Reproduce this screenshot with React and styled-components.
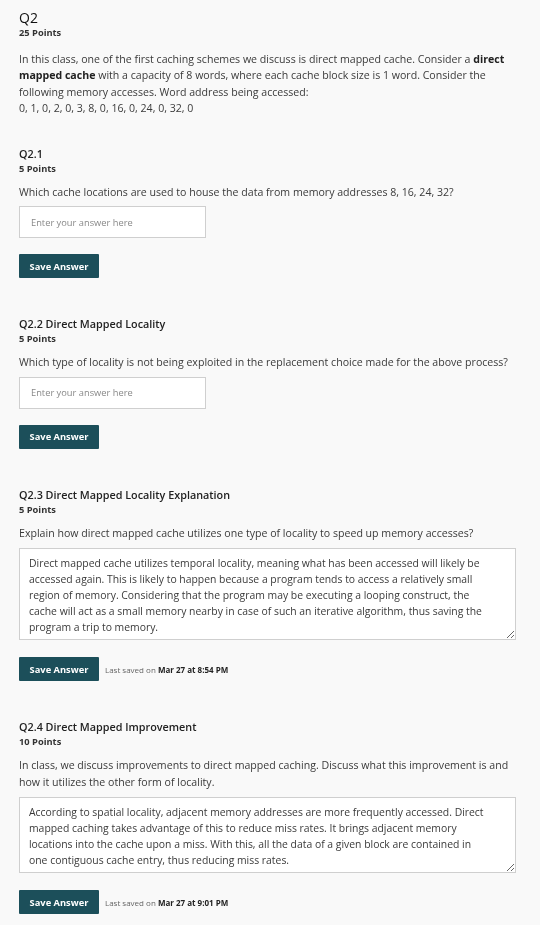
import React from 'react'
import styled, { createGlobalStyle } from 'styled-components'

const GlobalStyle = createGlobalStyle`
  html, body {
    margin: 0;
    padding: 0;
    background: #f9f9f9;
  }
  body {
    font-family: "Open Sans", "Noto Sans", sans-serif;
    color: #333;
  }
`

const colors = {
  text: '#3a3a3a',
  muted: '#666',
  border: '#cfcfcf',
  button: '#1c4f5a'
}

const Page = styled.div`
  padding: 9px 24px 12px 19px;
`

const Title = styled.h2`
  margin: 0;
  font-size: 14px;
  font-weight: 500;
  line-height: 17px;
  color: #111;
`

const SubTitle = styled.h3`
  margin: 0;
  font-size: 10.8px;
  font-weight: 600;
  line-height: 16px;
  color: #222;
`

const Points = styled.div`
  font-size: 9.3px;
  font-weight: 700;
  line-height: 13px;
  color: #333;
`

const Prompt = styled.p`
  margin: ${p => (p.$main ? '11.5px 0 0' : '9px 0 0')};
  font-size: 10.6px;
  line-height: 16.5px;
  color: ${colors.text};
  b {
    font-weight: 700;
    color: #222;
  }
`

const Section = styled.section`
  margin-top: ${p => (p.$first ? '29px' : '38px')};
`

const Input = styled.input`
  display: block;
  box-sizing: border-box;
  width: 187px;
  height: 32px;
  margin-top: 6px;
  padding: 0 11px;
  border: 1px solid ${colors.border};
  background: #fff;
  font-family: inherit;
  font-size: 9.3px;
  color: ${colors.text};
  &::placeholder {
    color: #888;
  }
`

const TextArea = styled.textarea`
  display: block;
  box-sizing: border-box;
  width: 497px;
  height: ${p => p.$rows * 16 + 12}px;
  margin-top: 7px;
  padding: 6px 24px 6px 9px;
  border: 1px solid ${colors.border};
  background: #fff;
  font-family: inherit;
  font-size: 10.4px;
  line-height: 16px;
  color: ${colors.text};
  resize: vertical;
`

const Actions = styled.div`
  display: flex;
  align-items: center;
  gap: 6px;
  margin-top: ${p => (p.$afterText ? '17px' : '16px')};
`

const SaveButton = styled.button`
  box-sizing: border-box;
  width: 80px;
  height: 24px;
  padding: 0;
  border: none;
  border-radius: 1px;
  background: ${colors.button};
  color: #fff;
  font-family: inherit;
  font-size: 9.3px;
  font-weight: 700;
  cursor: pointer;
`

const Saved = styled.span`
  font-size: 8px;
  color: ${colors.muted};
  b {
    font-weight: 700;
    color: #222;
  }
`

const questions = [
  {
    id: 'Q2.1',
    points: 5,
    prompt: 'Which cache locations are used to house the data from memory addresses 8, 16, 24, 32?',
    kind: 'input'
  },
  {
    id: 'Q2.2 Direct Mapped Locality',
    points: 5,
    prompt: 'Which type of locality is not being exploited in the replacement choice made for the above process?',
    kind: 'input'
  },
  {
    id: 'Q2.3 Direct Mapped Locality Explanation',
    points: 5,
    prompt: 'Explain how direct mapped cache utilizes one type of locality to speed up memory accesses?',
    kind: 'text',
    rows: 5,
    answer:
      'Direct mapped cache utilizes temporal locality, meaning what has been accessed will likely be accessed again. This is likely to happen because a program tends to access a relatively small region of memory. Considering that the program may be executing a looping construct, the cache will act as a small memory nearby in case of such an iterative algorithm, thus saving the program a trip to memory.',
    saved: 'Mar 27 at 8:54 PM'
  },
  {
    id: 'Q2.4 Direct Mapped Improvement',
    points: 10,
    prompt: 'In class, we discuss improvements to direct mapped caching. Discuss what this improvement is and how it utilizes the other form of locality.',
    kind: 'text',
    rows: 4,
    answer:
      'According to spatial locality, adjacent memory addresses are more frequently accessed. Direct mapped caching takes advantage of this to reduce miss rates. It brings adjacent memory locations into the cache upon a miss. With this, all the data of a given block are contained in one contiguous cache entry, thus reducing miss rates.',
    saved: 'Mar 27 at 9:01 PM'
  }
]

const Question = ({ q, first }) => (
  <Section $first={first}>
    <SubTitle>{q.id}</SubTitle>
    <Points>{q.points} Points</Points>
    <Prompt>{q.prompt}</Prompt>
    {q.kind === 'input' ? (
      <Input placeholder="Enter your answer here" />
    ) : (
      <TextArea $rows={q.rows} defaultValue={q.answer} />
    )}
    <Actions $afterText={q.kind === 'text'}>
      <SaveButton>Save Answer</SaveButton>
      {q.saved && (
        <Saved>
          Last saved on <b>{q.saved}</b>
        </Saved>
      )}
    </Actions>
  </Section>
)

const App = () => (
  <>
    <GlobalStyle />
    <Page>
      <Title>Q2</Title>
      <Points>25 Points</Points>
      <Prompt $main>
        In this class, one of the first caching schemes we discuss is direct mapped cache. Consider a{' '}
        <b>direct mapped cache</b> with a capacity of 8 words, where each cache block size is 1 word. Consider the
        following memory accesses. Word address being accessed:
        <br />
        0, 1, 0, 2, 0, 3, 8, 0, 16, 0, 24, 0, 32, 0
      </Prompt>
      {questions.map((q, i) => (
        <Question key={q.id} q={q} first={i === 0} />
      ))}
    </Page>
  </>
)

export default App
